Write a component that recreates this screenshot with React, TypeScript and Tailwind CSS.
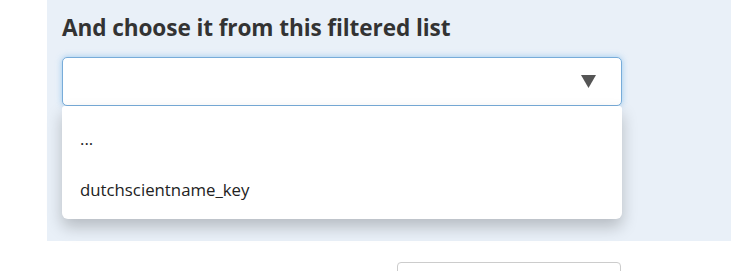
import React from "react";

export default function App() {
  return (
    <div className="w-[731px] h-[271px] bg-white overflow-hidden relative" style={{ fontFamily: '"Open Sans", sans-serif' }}>
      <div className="ml-[47px] h-[241px] bg-[#e9f0f8] pl-[15px] pt-[13px]">
        <h2 className="text-[22.6px] leading-[30px] font-bold text-[#333] tracking-[-0.1px]">And choose it from this filtered list</h2>
        <div className="relative mt-[14px] w-[560px]">
          <div className="h-[49px] rounded-[5px] border border-[#78acd9] bg-white shadow-[0_0_6px_rgba(102,175,233,0.6)] flex items-center justify-end pr-[25px]">
            <svg width="15" height="13" viewBox="0 0 15 13"><path d="M0 0H15L7.5 13Z" fill="#555" /></svg>
          </div>
          <div className="absolute left-0 top-[49px] w-[560px] h-[113px] bg-white rounded-b-[6px] rounded-t-[3px] shadow-[0_8px_16px_rgba(0,0,0,0.22)] pt-[22px] text-[16.8px] text-[#222]">
            <div className="pl-[18px] h-[51px] leading-[22px]">...</div>
            <div className="pl-[18px] leading-[22px]">dutchscientname_key</div>
          </div>
        </div>
      </div>
      <div className="absolute left-[397px] top-[262px] w-[224px] h-[40px] rounded-[4px] border border-[#ccc] bg-white" />
    </div>
  );
}
